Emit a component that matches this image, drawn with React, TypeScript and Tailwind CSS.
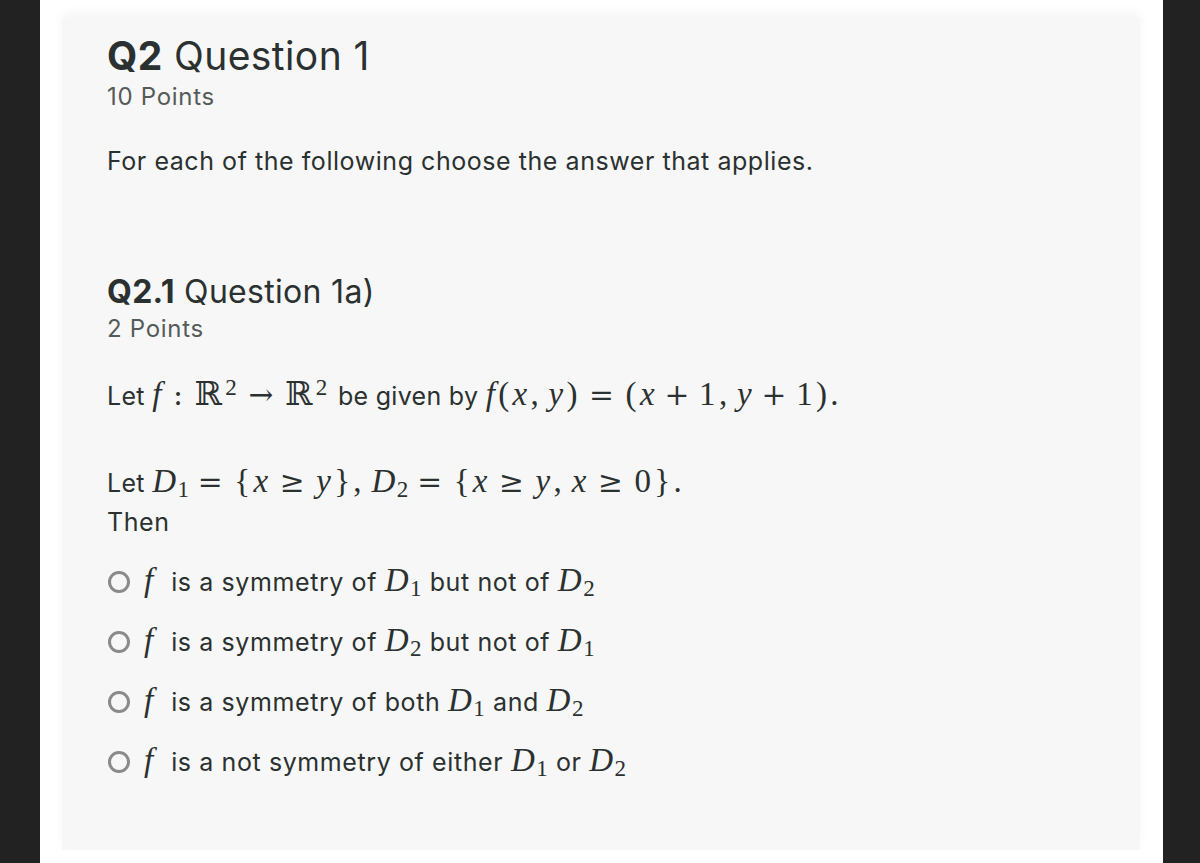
const sans = { fontFamily: 'Inter, "Open Sans", sans-serif' };

function M({ children, wide }: { children: React.ReactNode; wide?: boolean }) {
  return (
    <span
      className={
        "font-['Liberation_Serif','DejaVu_Serif',serif] text-[33px] leading-none " +
        (wide ? "tracking-[3.3px]" : "tracking-[1px]")
      }
    >
      {children}
    </span>
  );
}

function I({ children }: { children: React.ReactNode }) {
  return <span className="italic">{children}</span>;
}

// relation: = ≥ → :
function R({ children }: { children: React.ReactNode }) {
  return <span className="mx-[0.28em] font-['DejaVu_Serif',serif] text-[0.9em] font-light">{children}</span>;
}

// binary operator: +
function B({ children }: { children: React.ReactNode }) {
  return <span className="mx-[0.22em] font-['DejaVu_Serif',serif] text-[0.9em] font-light">{children}</span>;
}

function C() {
  return <span className="mr-[0.2em]">,</span>;
}

function Sub({ children }: { children: React.ReactNode }) {
  return <span className="relative top-[0.2em] ml-[1px] text-[0.7em]">{children}</span>;
}

function Sup({ children }: { children: React.ReactNode }) {
  return <span className="relative top-[-0.42em] text-[0.7em]">{children}</span>;
}

function D({ n }: { n: string }) {
  return (
    <span className="tracking-[0.5px]">
      <I>D</I>
      <Sub>{n}</Sub>
    </span>
  );
}

function Radio() {
  return <span className="inline-block w-[22px] h-[22px] rounded-full border-[3px] border-[#8a8a8a] shrink-0" />;
}

const options = [
  <>
    is a symmetry of <M><D n="1" /></M> but not of <M><D n="2" /></M>
  </>,
  <>
    is a symmetry of <M><D n="2" /></M> but not of <M><D n="1" /></M>
  </>,
  <>
    is a symmetry of both <M><D n="1" /></M> and <M><D n="2" /></M>
  </>,
  <>
    is a not symmetry of either <M><D n="1" /></M> or <M><D n="2" /></M>
  </>,
];

export default function App() {
  return (
    <div className="w-[1200px] h-[863px] bg-[#222222] flex overflow-hidden">
      <div className="ml-[40px] w-[1123px] h-full bg-white pl-[22px] pr-[23px] pt-[18px] pb-[13px]">
        <div
          className="h-full bg-[#f7f7f7] pl-[45px] pt-[16px] text-[#2b3130] shadow-[0_-6px_10px_rgba(0,0,0,0.04)]"
          style={sans}
        >
          <h1 className="text-[39px] leading-[44px] tracking-[0.4px]">
            <span className="font-bold">Q2</span> Question 1
          </h1>
          <div className="text-[24px] leading-[30px] tracking-[0.7px] text-[#555b5a] mt-[4px]">10 Points</div>
          <p className="text-[25px] leading-[30px] tracking-[0.55px] mt-[34px]">
            For each of the following choose the answer that applies.
          </p>

          <h2 className="text-[32px] leading-[40px] mt-[96px] tracking-[0.3px]">
            <span className="font-bold">Q2.1</span> Question 1a)
          </h2>
          <div className="text-[24px] leading-[30px] tracking-[0.7px] text-[#555b5a] mt-[2px]">2 Points</div>

          <p className="text-[25px] leading-[36px] tracking-[0.3px] mt-[34px]">
            Let{" "}
            <M wide>
              <I>f</I>
              <R>:</R>ℝ<Sup>2</Sup>
              <R>→</R>ℝ<Sup>2</Sup>
            </M>{" "}
            be given by{" "}
            <M wide>
              <I>f</I>(<I>x</I>
              <C />
              <I>y</I>)<R>=</R>(<I>x</I>
              <B>+</B>1<C />
              <I>y</I>
              <B>+</B>1).
            </M>
          </p>

          <p className="text-[25px] leading-[36px] tracking-[0.3px] mt-[51px]">
            Let{" "}
            <M wide>
              <D n="1" />
              <R>=</R>
              {"{"}
              <I>x</I>
              <R>≥</R>
              <I>y</I>
              {"}"}
              <C />
              <D n="2" />
              <R>=</R>
              {"{"}
              <I>x</I>
              <R>≥</R>
              <I>y</I>
              <C />
              <I>x</I>
              <R>≥</R>0{"}"}.
            </M>
          </p>
          <div className="text-[25px] leading-[30px] tracking-[0.6px] mt-[6px]">Then</div>

          <div className="mt-[27px] flex flex-col gap-[24px]">
            {options.map((o, i) => (
              <div key={i} className="flex items-center gap-[14px] h-[36px] pl-[1px]">
                <Radio />
                <span className="text-[25px] leading-[36px] tracking-[0.6px]">
                  <M>
                    <I>f</I>
                  </M>
                  <span className="ml-[17px]">{o}</span>
                </span>
              </div>
            ))}
          </div>
        </div>
      </div>
    </div>
  );
}
